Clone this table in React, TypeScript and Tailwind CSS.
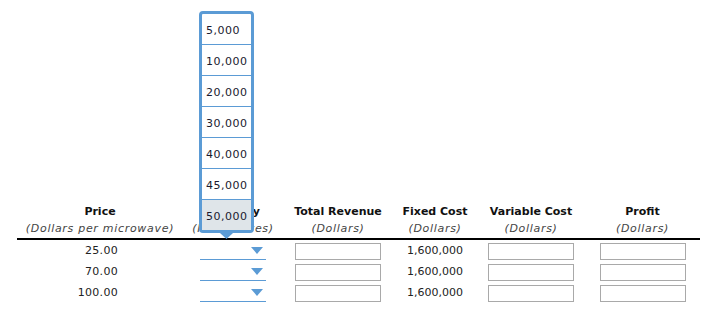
const FONT = { fontFamily: '"DejaVu Sans", Verdana, sans-serif' }

const options = ['5,000', '10,000', '20,000', '30,000', '40,000', '45,000', '50,000']
const prices = ['25.00', '70.00', '100.00']

function TextBox() {
  return <div className="w-[86px] h-[17px] border border-[#a9a9a9] bg-white" />
}

function Dropdown() {
  return (
    <div className="relative w-[66px] h-[17px] border-b border-[#5b9bd5]">
      <svg className="absolute right-[3px] top-[4px]" width="12" height="7" viewBox="0 0 12 7">
        <polygon points="0,0 12,0 6,7" fill="#5b9bd5" />
      </svg>
    </div>
  )
}

function Header({ title, unit }: { title: string; unit: string }) {
  return (
    <div className="flex flex-col items-center leading-[17px]">
      <span className="font-bold text-[#111]">{title}</span>
      <span className="italic text-[#444] tracking-[0.7px]">{unit}</span>
    </div>
  )
}

export default function App() {
  return (
    <div className="relative w-[706px] h-[318px] bg-white text-[11px] text-[#222]" style={FONT}>
      <div className="pt-[203px] pl-[17px]">
        <div className="w-[683px] grid grid-cols-[166px_100px_110px_84px_108px_115px] border-b-2 border-black pb-[1px]">
          <Header title="Price" unit="(Dollars per microwave)" />
          <Header title="Quantity" unit="(Microwaves)" />
          <Header title="Total Revenue" unit="(Dollars)" />
          <Header title="Fixed Cost" unit="(Dollars)" />
          <Header title="Variable Cost" unit="(Dollars)" />
          <Header title="Profit" unit="(Dollars)" />
        </div>
        <div className="w-[683px] pt-[3px] flex flex-col gap-[4px]">
          {prices.map((p) => (
            <div key={p} className="grid grid-cols-[166px_100px_110px_84px_108px_115px] items-center h-[17px]">
              <div className="text-right pr-[65px] tracking-[0.3px]">{p}</div>
              <div className="flex justify-center"><Dropdown /></div>
              <div className="flex justify-center"><TextBox /></div>
              <div className="text-center">1,600,000</div>
              <div className="flex justify-center"><TextBox /></div>
              <div className="flex justify-center"><TextBox /></div>
            </div>
          ))}
        </div>
      </div>

      {/* open dropdown list */}
      <div className="absolute left-[199px] top-[11px] z-10">
        <div className="w-[55px] border-[3px] border-[#5b9bd5] rounded-[4px] bg-white flex flex-col">
          {options.map((o, i) => (
            <div
              key={o}
              className={
                i === options.length - 1
                  ? 'h-[30px] flex items-center pl-[4px] pt-[4px] tracking-[0.5px] bg-[#dfe5e9] text-[#1a1a2e]'
                  : 'h-[31px] flex items-center pl-[4px] pt-[4px] tracking-[0.5px] border-b border-[#5b9bd5] text-[#1a1a2e]'
              }
            >
              {o}
            </div>
          ))}
        </div>
        <svg className="ml-[21px]" width="13" height="6" viewBox="0 0 13 6">
          <polygon points="0,0 13,0 6.5,6" fill="#5b9bd5" />
        </svg>
      </div>
    </div>
  )
}
